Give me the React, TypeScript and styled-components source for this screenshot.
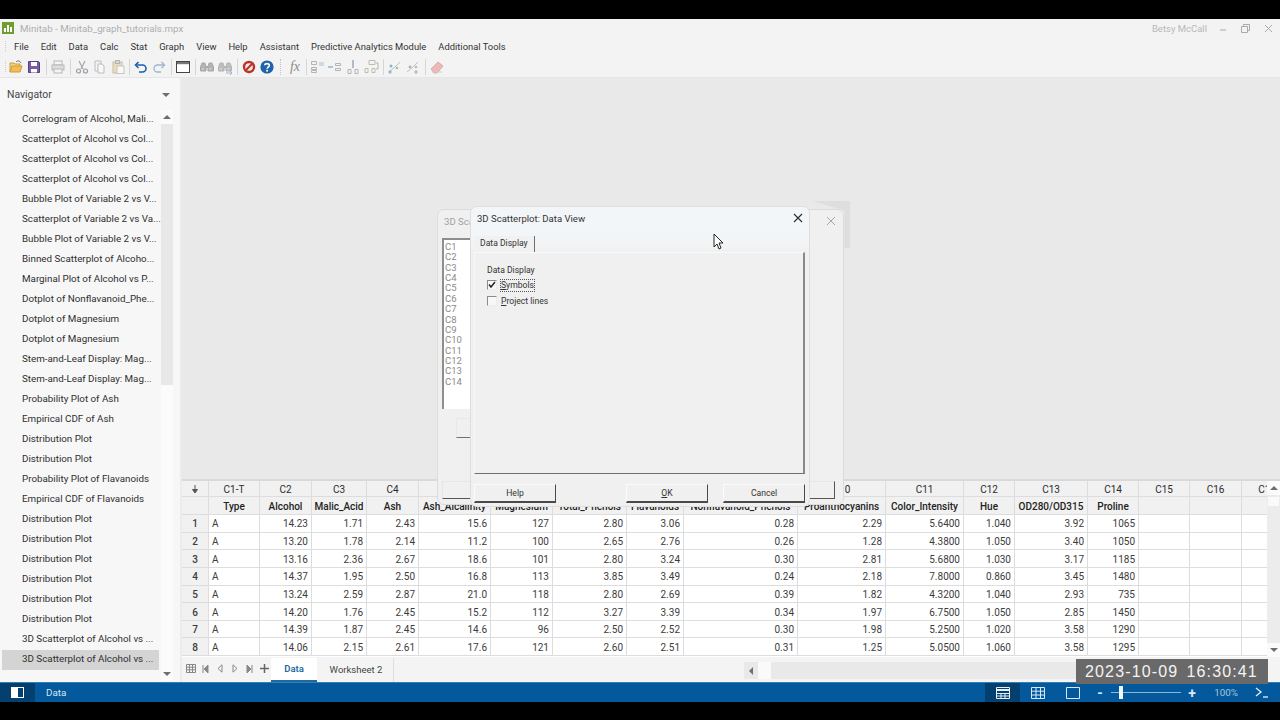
import React from "react";
import styled, { createGlobalStyle } from "styled-components";

const Global = createGlobalStyle`
  html, body { margin: 0; padding: 0; background: #000; }
  body { font-family: Roboto, "Open Sans", "Liberation Sans", sans-serif; overflow: hidden; }
  * { box-sizing: border-box; }
`;

const Screen = styled.div`
  position: relative; width: 1280px; height: 720px; background: #000;
  display: flex; flex-direction: column; padding: 19px 0 18px; overflow: hidden;
`;
const AppWindow = styled.div`
  flex: 1; min-height: 0; display: flex; flex-direction: column; background: #f3f3f3;
`;
const TitleBar = styled.div`
  height: 18px; display: flex; align-items: center; padding: 0 0 0 2px; color: #aeaeae; font-size: 9.75px;
`;
const AppTitle = styled.span` margin-left: 6px; flex: 1; `;
const UserName = styled.span` color: #b8b8b8; margin-right: 4px; font-size: 9.5px; `;
const WinControl = styled.span`
  width: 23px; display: flex; justify-content: center; align-items: center;
`;
const Grip = styled.span`
  width: 0; height: 11px; flex: none; border-left: 1px dotted #cfcfcf; margin-left: 5px;
`;
const MenuBar = styled.div`
  height: 19px; display: flex; align-items: center; font-size: 9.4px; color: #333;
`;
const MenuItems = styled.div` display: flex; margin-left: 2px; `;
const MenuItem = styled.span` padding: 0 6px; white-space: nowrap; `;
const ToolBar = styled.div`
  height: 22px; display: flex; align-items: center; border-bottom: 1px solid #e6e6e6;
`;
const ToolRow = styled.div` display: flex; align-items: center; margin-left: 1px; `;
const ToolButton = styled.span`
  width: 18px; height: 18px; display: flex; align-items: center; justify-content: center; flex: none;
`;
const FxGlyph = styled.span`
  font-family: "Liberation Serif", serif; font-style: italic; font-size: 14px; color: #8c8c8c; line-height: 1;
`;
const ToolSep = styled.span<{ $w?: number; $dots?: boolean }>`
  width: ${(p) => p.$w ?? 6}px; height: 16px; flex: none; display: flex; justify-content: center;
  &::after { content: ""; width: 1px; height: 100%;
    ${(p) => (p.$dots ? "border-left: 1px dotted #c4c4c4;" : "background: #d6d6d6;")} }
`;
const Body = styled.div` flex: 1; min-height: 0; display: flex; `;
const Sidebar = styled.div`
  width: 182px; flex: none; display: flex; flex-direction: column; background: #f7f7f7; border-right: 2px solid #ececec;
`;
const NavHeader = styled.div`
  height: 32px; flex: none; display: flex; align-items: center; justify-content: space-between;
  padding: 1px 10px 0 7px; font-size: 10.4px; color: #454545;
`;
const Triangle = styled.span<{ $up?: boolean; $color?: string }>`
  width: 0; height: 0; border-left: 4px solid transparent; border-right: 4px solid transparent;
  ${(p) => (p.$up ? "border-bottom" : "border-top")}: 4px solid ${(p) => p.$color ?? "#6e6e6e"};
`;
const NavContent = styled.div` flex: 1; min-height: 0; display: flex; `;
const NavList = styled.div` width: 157px; margin-left: 2px; flex: none; `;
const NavRow = styled.div<{ $sel?: boolean }>`
  height: 20px; padding: 0 0 3px 20px; display: flex; align-items: center; white-space: nowrap;
  font-size: 9.8px; color: #2f2f2f; background: ${(p) => (p.$sel ? "#d4d4d4" : "transparent")};
`;
const NavScroll = styled.div`
  width: 12px; margin-left: 2px; height: 571px; display: flex; flex-direction: column; background: #fff;
`;
const ScrollBtn = styled.div`
  height: 14px; flex: none; background: #fbfbfb; display: flex; align-items: center; justify-content: center;
`;
const NavTrack = styled.div` height: 261px; background: #e8e8e8; flex: none; `;
const NavThumb = styled.div` flex: 1; background: #fbfbfb; `;
const Main = styled.div` flex: 1; min-width: 0; display: flex; flex-direction: column; `;
const Canvas = styled.div` flex: 1; background: #e9e9e9; border-bottom: 2px solid #d9d9d9; `;
const SheetWrap = styled.div` height: 176px; flex: none; display: flex; background: #fff; `;
const SheetClip = styled.div` flex: 1; min-width: 0; overflow: hidden; `;
const SheetGrid = styled.div`
  display: grid;
  grid-template-columns: 27px 51px 52px 55px 52px 72px 62px 74px 57px 114px 88px 78px 51px 73px 51px 51px 52px 51px;
  grid-template-rows: 16px 18px repeat(8, 17.65px);
  width: 1111px;
`;
const Cell = styled.div<{ $kind: "head" | "name" | "row" | "text" | "num" | "corner" }>`
  border-right: 1px solid #dddddd; border-bottom: 1px solid #dddddd; overflow: hidden; white-space: nowrap;
  display: flex; align-items: center; font-size: 10px; color: #3c3c3c;
  justify-content: ${(p) => (p.$kind === "num" ? "flex-end" : p.$kind === "text" ? "flex-start" : "center")};
  padding: ${(p) => (p.$kind === "num" ? "1px 3px 0 0" : p.$kind === "text" ? "1px 0 0 3px" : "1px 0 0")};
  background: ${(p) => (p.$kind === "num" || p.$kind === "text" ? "#fff" : "#f1f1f1")};
  font-weight: ${(p) => (p.$kind === "name" || p.$kind === "row" || p.$kind === "corner" ? 500 : 400)};
  ${(p) => (p.$kind === "head" ? "color:#2c2c2c;" : "")}
  ${(p) => (p.$kind === "name" ? "color:#222;" : "")}
`;
const SheetScroll = styled.div`
  width: 13px; flex: none; background: #ececec; display: flex; flex-direction: column;
`;
const SheetThumb = styled.div` height: 9px; margin: 2px 1px 0; background: #fafafa; flex: none; `;
const SheetSpacer = styled.div` flex: 1; `;
const TabRow = styled.div`
  height: 25px; flex: none; display: flex; align-items: stretch; background: #f4f4f4; padding-top: 1px;
`;
const TabNav = styled.div` width: 89px; flex: none; display: flex; align-items: center; padding: 0 0 3px 2px; `;
const TabNavBtn = styled.span`
  width: 14.6px; flex: none; display: flex; justify-content: center;
`;
const SheetTab = styled.div<{ $active?: boolean }>`
  display: flex; align-items: center; justify-content: center; font-size: 9.5px;
  padding: ${(p) => (p.$active ? "0 0 1px" : "0 0 1px 2px")};
  width: ${(p) => (p.$active ? 46 : 77)}px;
  color: ${(p) => (p.$active ? "#1f6a9f" : "#454545")};
  font-weight: ${(p) => (p.$active ? 600 : 400)};
  background: ${(p) => (p.$active ? "#fff" : "transparent")};
  border-bottom: ${(p) => (p.$active ? "2px solid #1f6a9f" : "none")};
  border-right: ${(p) => (p.$active ? "none" : "1px solid #dedede")};
`;
const HScroll = styled.div`
  margin: 4px 13px 3px auto; width: 523px; background: #e9e9e9; display: flex; align-items: center;
`;
const HLeft = styled.span` width: 14px; display: flex; justify-content: center; `;
const HThumb = styled.span` width: 13px; height: 100%; background: #fafafa; `;
const LeftTri = styled.span`
  width: 0; height: 0; border-top: 4px solid transparent; border-bottom: 4px solid transparent; border-right: 4px solid #707070;
`;
const StatusBar = styled.div`
  height: 20px; flex: none; display: flex; align-items: center; background: #04589c; color: #d6e6f2;
  font-size: 9.8px; border-top: 1px solid #2e7fb5;
`;
const PaneToggle = styled.div`
  width: 35px; height: 100%; background: #03406f; display: flex; align-items: center; justify-content: center;
`;
const StatusLabel = styled.span` margin-left: 11px; flex: 1; `;
const ViewBtn = styled.div<{ $on?: boolean }>`
  width: 35px; height: 100%; display: flex; align-items: center; justify-content: center;
  background: ${(p) => (p.$on ? "#03406f" : "transparent")};
`;
const ZoomMark = styled.span<{ $tight?: boolean }>`
  width: 24px; text-align: center; font-size: 14px; font-weight: 700; color: #d9e8f3; line-height: 1;
  ${(p) => (p.$tight ? "margin-left: -2px;" : "")}
`;
const ZoomTrack = styled.div`
  position: relative; width: 70px; height: 1px; background: #8cb7d6; margin: 0 -1px;
  display: flex; align-items: center;
`;
const ZoomThumb = styled.span` width: 4px; height: 13px; background: #f2f6fa; margin-left: 8px; flex: none; `;
const ZoomValue = styled.span` width: 52px; text-align: center; color: #a9c7de; margin-left: -4px; `;
const ConsoleBtn = styled.span` width: 18px; margin: 0 7px 0 3px; display: flex; `;

const Timestamp = styled.div`
  position: absolute; left: 1076px; top: 659px; width: 192px; height: 25px; background: #696969;
  color: #f4f4f4; font-family: "Liberation Sans", sans-serif; font-size: 16px; letter-spacing: 1.15px;
  word-spacing: 2.5px; display: flex; align-items: center; padding-left: 9px; white-space: pre;
`;

const Wedge = styled.div`
  position: absolute; left: 812px; top: 201px; width: 38px; height: 47px; background: #dedede;
  clip-path: polygon(0 0, 100% 0, 100% 100%, 85% 100%, 85% 20%);
`;
const BackDialog = styled.div`
  position: absolute; left: 437px; top: 209px; width: 407px; height: 296px; background: #f0f0f0;
  border: 1px solid #dcdcdc; border-radius: 7px; display: flex; flex-direction: column; padding: 0 8px 0 4px;
`;
const BackTitle = styled.div`
  height: 22px; flex: none; display: flex; align-items: center; justify-content: space-between;
  font-size: 9.6px; color: #a2a2a2; padding: 0 0 0 2px;
  svg { margin-right: -1px; }
`;
const ColumnList = styled.div`
  margin-top: 6px; width: 60px; height: 171px; background: #fff; flex: none;
  border-top: 2px solid #8e8e8e; border-left: 2px solid #8e8e8e;
  padding: 2px 0 0 1px; font-size: 9.5px; color: #8a8a8a; line-height: 10.36px;
`;
const BackSmallBtn = styled.div`
  margin: 9px 0 0 14px; width: 60px; height: 20px; flex: none; border-bottom: 1px solid #6f6f6f; border-left: 1px solid #e8e8e8;
  border-top: 1px solid #e8e8e8;
`;
const BackFooter = styled.div`
  margin-top: 43px; display: flex; justify-content: space-between; padding-right: 0;
`;
const BackBtn = styled.div`
  width: 80px; height: 18px; border-bottom: 1px solid #555; border-right: 1px solid #555; border-top: 1px solid #e6e6e6; border-left: 1px solid #e6e6e6;
`;
const FrontDialog = styled.div`
  position: absolute; left: 470px; top: 206px; width: 340px; height: 301px; background: #f0f0f0;
  border: 1px solid #dedede; border-radius: 7px; display: flex; flex-direction: column; padding: 0 4px 0 3px;
  background-image: linear-gradient(#f3f6f8 0, #f3f6f8 29px, #f0f0f0 46px);
`;
const FrontTitle = styled.div`
  height: 23px; flex: none; display: flex; align-items: center; justify-content: space-between; padding: 0 2px 0 3px;
  font-size: 9.55px; color: #333;
  svg { margin-top: -2px; }
`;
const TabStrip = styled.div` height: 16px; margin-top: 6px; flex: none; display: flex; `;
const DlgTab = styled.div`
  width: 61px; font-size: 8.6px; color: #333; display: flex; align-items: center; padding: 0 0 2px 6px;
  border-right: 1px solid #6e6e6e; background: #f1f1f1;
`;
const TabPanel = styled.div`
  height: 222px; flex: none; border-top: 1px solid #fafafa; border-left: 1px solid #f8f8f8;
  border-right: 2px solid #8a8a8a; border-bottom: 1px solid #6f6f6f; padding: 11px 0 0 12px;
  background: #f0f0f0; font-size: 8.6px; color: #333;
`;
const GroupLabel = styled.div` height: 12px; line-height: 12px; margin-bottom: 1px; `;
const CheckRow = styled.div` height: 16px; display: flex; align-items: center; `;
const CheckBox = styled.span`
  width: 10px; height: 10px; flex: none; background: #f7f7f7; border-top: 1px solid #8b8b8b; border-left: 1px solid #8b8b8b;
  border-right: 1px solid #ececec; border-bottom: 1px solid #ececec; display: flex; align-items: center; justify-content: center;
`;
const CheckLabel = styled.span<{ $focus?: boolean }>`
  margin-left: 3px; padding: 0; line-height: 11px;
  border: 1px ${(p) => (p.$focus ? "dotted #555" : "solid transparent")};
  u { text-decoration: underline; }
`;
const DlgFooter = styled.div`
  margin-top: 10px; display: flex; gap: 15px;
`;
const DlgButton = styled.div<{ $push?: boolean }>`
  width: 82px; height: 19px; display: flex; align-items: center; justify-content: center;
  font-size: 8.6px; color: #333; background: #f0f0f0;
  border-top: 1px solid #fbfbfb; border-left: 1px solid #fbfbfb;
  border-right: 1px solid #4a4a4a; border-bottom: 2px solid #4a4a4a;
  ${(p) => (p.$push ? "margin-left: auto;" : "")}
  u { text-decoration: underline; }
`;
const Cursor = styled.svg` position: absolute; left: 713px; top: 233px; `;

const S: React.FC<{ children: React.ReactNode; w?: number; h?: number; op?: number }> = ({ children, w = 16, h = 16, op = 1 }) => (
  <svg width={w} height={h} viewBox={`0 0 ${w} ${h}`} fill="none" opacity={op}>{children}</svg>
);

const Binoculars: React.FC<{ op: number; arrow?: boolean }> = ({ op, arrow }) => (
  <S op={op}>
    <path d="M3 4h3l1 4v4H1.500V8zM10 4h3l1.500 4v4H9V8z" fill="#8a8a8a" stroke="#777" />
    <path d="M7 7h2v2H7z" fill="#777" />
    <path d="M2.800 10h2M10.300 10h2" stroke="#d8d8d8" />
    {arrow && <path d="M9 14h6m-2-2l2 2-2 2" stroke="#4b7aa8" />}
  </S>
);

const tools: (React.ReactNode | { w?: number; dots?: boolean })[] = [
  <S><path d="M2 13V4h4l1 1h5v2" stroke="#c89b3c" fill="#f0d58a" /><path d="M2 13l2-6h10l-2 6z" fill="#efbf52" stroke="#d39a32" /><path d="M8 3c2-2 4-1 5 1" stroke="#666" /></S>,
  <S><path d="M2.500 2.500h10l1 1v10h-11z" fill="#7a5ba8" stroke="#55407e" /><rect x="5" y="3" width="6" height="4" fill="#fff" /><rect x="5" y="10" width="6" height="3.500" fill="#fff" /></S>,
  {},
  <S op={0.55}><rect x="4" y="2" width="8" height="4" fill="#f6f6f6" stroke="#888" /><rect x="2" y="6" width="12" height="5" fill="#c6cdd2" stroke="#888" /><rect x="4" y="10" width="8" height="4" fill="#f6f6f6" stroke="#888" /></S>,
  {},
  <S op={0.6}><path d="M5 2l4 8M11 2L7 10" stroke="#777" strokeWidth="1.200" /><circle cx="4.500" cy="12" r="2" stroke="#5a6a78" strokeWidth="1.200" /><circle cx="11.500" cy="12" r="2" stroke="#5a6a78" strokeWidth="1.200" /></S>,
  <S op={0.5}><path d="M3 2h6v10H3z" fill="#f4f4f4" stroke="#888" /><path d="M6 5h4l2 2v7H6z" fill="#fff" stroke="#888" /></S>,
  <S op={0.5}><rect x="3" y="3" width="9" height="11" fill="#e3c98d" stroke="#a78c52" /><rect x="5.500" y="1.500" width="4" height="3" fill="#bbb" stroke="#777" /><rect x="7" y="7" width="7" height="7.500" fill="#fff" stroke="#999" /></S>,
  { w: 5 },
  <S><path d="M5.500 3L2.500 6l3 3" stroke="#1d62a8" strokeWidth="1.600" /><path d="M3 6h6.500a3.200 3.200 0 0 1 0 7H6" stroke="#1d62a8" strokeWidth="1.600" /></S>,
  <S op={0.7}><path d="M10.500 3l3 3-3 3" stroke="#7a9cc0" strokeWidth="1.300" /><path d="M13 6H6.500a3.200 3.200 0 0 0 0 7H10" stroke="#7a9cc0" strokeWidth="1.300" /></S>,
  {},
  <S w={14} h={14}><rect x="0.500" y="1.500" width="13" height="11" fill="#fff" stroke="#444" /><rect x="1" y="2" width="12" height="2.200" fill="#777" /></S>,
  {},
  <Binoculars op={0.6} />,
  <Binoculars op={0.5} arrow />,
  {},
  <S><circle cx="8" cy="8" r="6.200" fill="#b8352a" /><circle cx="8" cy="8" r="3.800" fill="#f4ecea" /><path d="M5 11l6-6" stroke="#b8352a" strokeWidth="2.200" /></S>,
  <S><circle cx="8" cy="8" r="6.600" fill="#1f63a8" /><path d="M5.800 6.300C5.900 4 10.300 4 10.300 6.400c0 1.600-2.200 1.700-2.200 3.400" stroke="#fff" strokeWidth="1.600" /><rect x="7.200" y="10.800" width="1.800" height="1.800" fill="#fff" /></S>,
  { w: 10, dots: true },
  <FxGlyph>fx</FxGlyph>,
  { w: 4 },
  <S op={0.5}><path d="M2.500 2.500h5v3h-5zM2.500 8.500h5v2h-5zM2.500 11.500h5v2h-5z" stroke="#777" /><path d="M10 4h5M10 6h5" stroke="#6a8aa8" /></S>,
  <S op={0.5}><path d="M1 8h5" stroke="#5a7a98" strokeWidth="1.600" /><path d="M8.500 4.500h5v2h-5zM8.500 9.500h5v2h-5z" stroke="#777" /></S>,
  <S op={0.5}><path d="M8 1v8" stroke="#5a7a98" strokeWidth="1.800" /><path d="M3 10.500h3v4H3zM10 10.500h3v4h-3z" stroke="#777" /></S>,
  <S op={0.5}><path d="M6 1.500h6v4H6zM2 9.500h3v4H2zM9 9.500h3v4H9z" stroke="#8a8a6a" /><path d="M13 4h2v6h-2" stroke="#777" /></S>,
  {},
  <S op={0.6}><path d="M2 13l6-5 5-5" stroke="#8aa0b0" /><circle cx="4" cy="7" r="1.500" fill="#4d88a8" /><circle cx="10" cy="9" r="1.300" fill="#7da04a" /><path d="M3 11v4M1 13h4" stroke="#3f80b0" /></S>,
  <S op={0.55}><path d="M2 13l6-5 5-5" stroke="#8aa0b0" /><circle cx="5" cy="8" r="1.400" fill="#777" /><circle cx="11" cy="8" r="1.300" fill="#7da04a" /><path d="M11 11v4M9 13h4" stroke="#777" /></S>,
  {},
  <S op={0.55}><path d="M2 10l7-7 5 4-6 7H5z" fill="#e78b8b" stroke="#c97070" /><path d="M3 13h10" stroke="#d0a0a0" /></S>,
];

const menu = ["File", "Edit", "Data", "Calc", "Stat", "Graph", "View", "Help", "Assistant", "Predictive Analytics Module", "Additional Tools"];

const navItems = [
  "Correlogram of Alcohol, Mali...", "Scatterplot of Alcohol vs Col...", "Scatterplot of Alcohol vs Col...", "Scatterplot of Alcohol vs Col...",
  "Bubble Plot of Variable 2 vs V...", "Scatterplot of Variable 2 vs Va...", "Bubble Plot of Variable 2 vs V...", "Binned Scatterplot of Alcoho...",
  "Marginal Plot of Alcohol vs P...", "Dotplot of Nonflavanoid_Phe...", "Dotplot of Magnesium", "Dotplot of Magnesium",
  "Stem-and-Leaf Display: Mag...", "Stem-and-Leaf Display: Mag...", "Probability Plot of Ash", "Empirical CDF of Ash",
  "Distribution Plot", "Distribution Plot", "Probability Plot of Flavanoids", "Empirical CDF of Flavanoids",
  "Distribution Plot", "Distribution Plot", "Distribution Plot", "Distribution Plot", "Distribution Plot", "Distribution Plot",
  "3D Scatterplot of Alcohol vs ...", "3D Scatterplot of Alcohol vs ...",
];

const heads = ["C1-T", "C2", "C3", "C4", "C5", "C6", "C7", "C8", "C9", "C10", "C11", "C12", "C13", "C14", "C15", "C16", "C17"];
const names = ["Type", "Alcohol", "Malic_Acid", "Ash", "Ash_Alcalinity", "Magnesium", "Total_Phenols", "Flavanoids", "Nonflavanoid_Phenols", "Proanthocyanins", "Color_Intensity", "Hue", "OD280/OD315", "Proline", "", "", ""];
const rows = [
  "14.23 1.71 2.43 15.6 127 2.80 3.06 0.28 2.29 5.6400 1.040 3.92 1065",
  "13.20 1.78 2.14 11.2 100 2.65 2.76 0.26 1.28 4.3800 1.050 3.40 1050",
  "13.16 2.36 2.67 18.6 101 2.80 3.24 0.30 2.81 5.6800 1.030 3.17 1185",
  "14.37 1.95 2.50 16.8 113 3.85 3.49 0.24 2.18 7.8000 0.860 3.45 1480",
  "13.24 2.59 2.87 21.0 118 2.80 2.69 0.39 1.82 4.3200 1.040 2.93 735",
  "14.20 1.76 2.45 15.2 112 3.27 3.39 0.34 1.97 6.7500 1.050 2.85 1450",
  "14.39 1.87 2.45 14.6 96 2.50 2.52 0.30 1.98 5.2500 1.020 3.58 1290",
  "14.06 2.15 2.61 17.6 121 2.60 2.51 0.31 1.25 5.0500 1.060 3.58 1295",
].map((r) => r.split(" "));

const columns = ["C1", "C2", "C3", "C4", "C5", "C6", "C7", "C8", "C9", "C10", "C11", "C12", "C13", "C14"];

export default function App() {
  return (
    <Screen>
      <Global />
      <AppWindow>
        <TitleBar>
          <svg width="12" height="12" viewBox="0 0 12 12">
            <rect width="12" height="12" fill="#6d9f2e" />
            <rect x="2" y="6" width="2" height="4" fill="#fff" />
            <rect x="5" y="3" width="2" height="7" fill="#fff" />
            <rect x="8" y="5" width="2" height="5" fill="#fff" />
          </svg>
          <AppTitle>Minitab - Minitab_graph_tutorials.mpx</AppTitle>
          <UserName>Betsy McCall</UserName>
          <WinControl><svg width="8" height="8"><path d="M1 6h6" stroke="#aaa" /></svg></WinControl>
          <WinControl><svg width="9" height="9" fill="none"><path d="M.5 2.500h6v6h-6zM2.500 2.500v-2h6v6h-2" stroke="#aaa" /></svg></WinControl>
          <WinControl><svg width="9" height="9"><path d="M1 1l7 7M8 1L1 8" stroke="#aaa" /></svg></WinControl>
        </TitleBar>
        <MenuBar>
          <Grip />
          <MenuItems>{menu.map((m) => <MenuItem key={m}>{m}</MenuItem>)}</MenuItems>
        </MenuBar>
        <ToolBar>
          <Grip />
          <ToolRow>
            {tools.map((t, i) =>
              React.isValidElement(t) ? (
                <ToolButton key={i}>{t}</ToolButton>
              ) : (
                <ToolSep key={i} $w={(t as { w?: number }).w} $dots={(t as { dots?: boolean }).dots} />
              )
            )}
          </ToolRow>
        </ToolBar>
        <Body>
          <Sidebar>
            <NavHeader>Navigator<Triangle /></NavHeader>
            <NavContent>
              <NavList>
                {navItems.map((n, i) => <NavRow key={i} $sel={i === navItems.length - 1}>{n}</NavRow>)}
              </NavList>
              <NavScroll>
                <ScrollBtn><Triangle $up /></ScrollBtn>
                <NavTrack />
                <NavThumb />
                <ScrollBtn><Triangle /></ScrollBtn>
              </NavScroll>
            </NavContent>
          </Sidebar>
          <Main>
            <Canvas />
            <SheetWrap>
              <SheetClip>
                <SheetGrid>
                  <Cell $kind="corner"><svg width="8" height="9"><path d="M4 0v6M1.500 4.500L4 8l2.500-3.500z" stroke="#555" fill="#555" /></svg></Cell>
                  {heads.map((h) => <Cell key={h} $kind="head">{h}</Cell>)}
                  <Cell $kind="corner" />
                  {names.map((n, i) => <Cell key={i} $kind="name">{n}</Cell>)}
                  {rows.map((r, i) => (
                    <React.Fragment key={i}>
                      <Cell $kind="row">{i + 1}</Cell>
                      <Cell $kind="text">A</Cell>
                      {r.map((v, j) => <Cell key={j} $kind="num">{v}</Cell>)}
                      <Cell $kind="num" />
                      <Cell $kind="num" />
                      <Cell $kind="num" />
                    </React.Fragment>
                  ))}
                </SheetGrid>
              </SheetClip>
              <SheetScroll>
                <ScrollBtn><Triangle $up /></ScrollBtn>
                <SheetThumb />
                <SheetSpacer />
                <ScrollBtn><Triangle /></ScrollBtn>
              </SheetScroll>
            </SheetWrap>
            <TabRow>
              <TabNav>
                <TabNavBtn><svg width="10" height="9" fill="none"><path d="M.5.5h9v8h-9zM.5 3.200h9M.5 5.800h9M3.500.5v8M6.500.5v8" stroke="#888" /></svg></TabNavBtn>
                <TabNavBtn><svg width="7" height="8"><path d="M1 0v8M6 0v8L2 4z" stroke="#888" fill="#888" /></svg></TabNavBtn>
                <TabNavBtn><svg width="6" height="9" fill="none"><path d="M5 .8v7.400L1 4.500z" stroke="#888" /></svg></TabNavBtn>
                <TabNavBtn><svg width="6" height="9" fill="none"><path d="M1 .8v7.400l4-3.700z" stroke="#888" /></svg></TabNavBtn>
                <TabNavBtn><svg width="7" height="8"><path d="M6 0v8M1 0v8l4-4z" stroke="#888" fill="#888" /></svg></TabNavBtn>
                <TabNavBtn><svg width="9" height="9"><path d="M4.500 0v9M0 4.500h9" stroke="#666" strokeWidth="1.500" /></svg></TabNavBtn>
              </TabNav>
              <SheetTab $active>Data</SheetTab>
              <SheetTab>Worksheet 2</SheetTab>
              <HScroll>
                <HLeft><LeftTri /></HLeft>
                <HThumb />
              </HScroll>
            </TabRow>
          </Main>
        </Body>
        <StatusBar>
          <PaneToggle>
            <svg width="13" height="11"><rect x=".5" y=".5" width="12" height="10" fill="none" stroke="#fff" /><rect x="1" y="1" width="6" height="9" fill="#fff" /></svg>
          </PaneToggle>
          <StatusLabel>Data</StatusLabel>
          <ViewBtn $on>
            <svg width="14" height="12" fill="none"><path d="M.5.5h13v11H.5z" stroke="#e8eef4" /><path d="M1 3h12" stroke="#e8eef4" strokeWidth="2" /><path d="M.5 6.500h13M.5 9h13M5 6.500v5M9 6.500v5" stroke="#e8eef4" /></svg>
          </ViewBtn>
          <ViewBtn>
            <svg width="14" height="12" fill="none"><path d="M.5.5h13v11H.5zM.5 4.200h13M.5 8h13M5 .5v11M9.500.5v11" stroke="#d8e8f4" /></svg>
          </ViewBtn>
          <ViewBtn>
            <svg width="14" height="12" fill="none"><path d="M.5.5h13v11H.5z" stroke="#d8e8f4" /></svg>
          </ViewBtn>
          <ZoomMark $tight>-</ZoomMark>
          <ZoomTrack><ZoomThumb /></ZoomTrack>
          <ZoomMark>+</ZoomMark>
          <ZoomValue>100%</ZoomValue>
          <ConsoleBtn>
            <svg width="14" height="11" fill="none"><path d="M1 1l5 4-5 4" stroke="#e8f0f6" strokeWidth="1.300" /><path d="M8 10h5" stroke="#e8f0f6" strokeWidth="1.300" /></svg>
          </ConsoleBtn>
        </StatusBar>
      </AppWindow>

      <Wedge />
      <BackDialog>
        <BackTitle>
          <span>3D Scatterplot</span>
          <svg width="10" height="10"><path d="M1 1l8 8M9 1l-8 8" stroke="#a6a6a6" /></svg>
        </BackTitle>
        <ColumnList>
          {columns.map((c) => <div key={c}>{c}</div>)}
        </ColumnList>
        <BackSmallBtn />
        <BackFooter><BackBtn /><BackBtn /></BackFooter>
      </BackDialog>

      <FrontDialog>
        <FrontTitle>
          <span>3D Scatterplot: Data View</span>
          <svg width="10" height="10"><path d="M1 1l8 8M9 1l-8 8" stroke="#2c2c2c" strokeWidth="1.100" /></svg>
        </FrontTitle>
        <TabStrip><DlgTab>Data Display</DlgTab></TabStrip>
        <TabPanel>
          <GroupLabel>Data Display</GroupLabel>
          <CheckRow>
            <CheckBox><svg width="8" height="8" fill="none"><path d="M1 3.500l2 2.500 4-5" stroke="#222" strokeWidth="1.500" /></svg></CheckBox>
            <CheckLabel $focus><u>S</u>ymbols</CheckLabel>
          </CheckRow>
          <CheckRow>
            <CheckBox />
            <CheckLabel><u>P</u>roject lines</CheckLabel>
          </CheckRow>
        </TabPanel>
        <DlgFooter>
          <DlgButton>Help</DlgButton>
          <DlgButton $push><span><u>O</u>K</span></DlgButton>
          <DlgButton>Cancel</DlgButton>
        </DlgFooter>
      </FrontDialog>

      <Cursor width="11" height="17" viewBox="0 0 11 17">
        <path d="M1 1v13l3-3 2 5 2-1-2-5h4z" fill="#fff" stroke="#222" />
      </Cursor>
      <Timestamp>2023-10-09 16:30:41</Timestamp>
    </Screen>
  );
}
